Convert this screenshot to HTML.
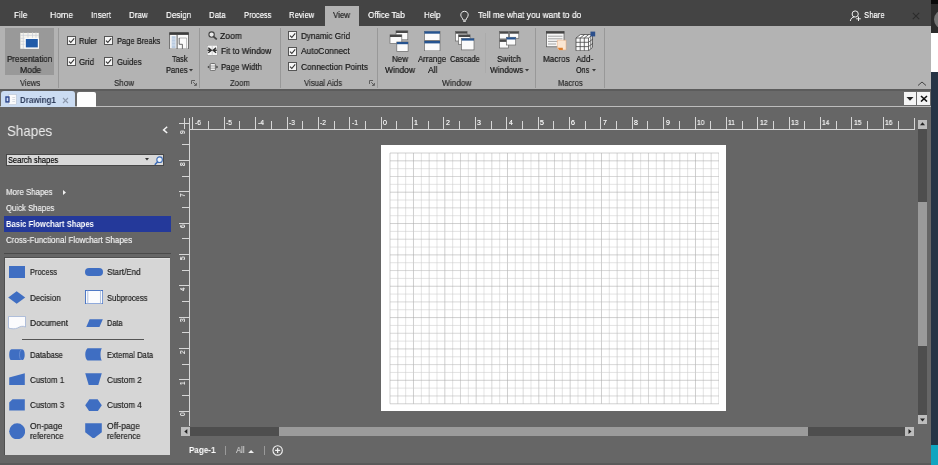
<!DOCTYPE html>
<html><head><meta charset="utf-8"><title>Visio - Drawing1</title>
<style>
html,body{margin:0;padding:0;}
body{width:938px;height:465px;overflow:hidden;background:#666666;position:relative;font-family:"Liberation Sans",sans-serif;}
.t{position:absolute;white-space:pre;line-height:1;transform-origin:0 0;will-change:transform;text-shadow:0 0 0.35px currentColor;}
.r{position:absolute;display:block;}
</style></head><body>
<div class="r" style="left:0.00px;top:0.00px;width:931.00px;height:25.70px;background:#444444;"></div>
<div class="r" style="left:324.50px;top:5.50px;width:34.10px;height:20.50px;background:#b3b3b3;"></div>
<span class="t" style="left:13.50px;top:11.00px;font-size:9.2px;transform:scaleX(0.8972);color:#f2f2f2;">File</span>
<span class="t" style="left:49.70px;top:11.00px;font-size:9.2px;transform:scaleX(0.9373);color:#f2f2f2;">Home</span>
<span class="t" style="left:90.50px;top:11.00px;font-size:9.2px;transform:scaleX(0.8736);color:#f2f2f2;">Insert</span>
<span class="t" style="left:128.70px;top:11.00px;font-size:9.2px;transform:scaleX(0.8711);color:#f2f2f2;">Draw</span>
<span class="t" style="left:165.50px;top:11.00px;font-size:9.2px;transform:scaleX(0.8800);color:#f2f2f2;">Design</span>
<span class="t" style="left:208.70px;top:11.00px;font-size:9.2px;transform:scaleX(0.8594);color:#f2f2f2;">Data</span>
<span class="t" style="left:243.60px;top:11.00px;font-size:9.2px;transform:scaleX(0.8275);color:#f2f2f2;">Process</span>
<span class="t" style="left:289.40px;top:11.00px;font-size:9.2px;transform:scaleX(0.8387);color:#f2f2f2;">Review</span>
<span class="t" style="left:368.30px;top:11.00px;font-size:9.2px;transform:scaleX(0.8958);color:#f2f2f2;">Office Tab</span>
<span class="t" style="left:423.90px;top:11.00px;font-size:9.2px;transform:scaleX(0.8721);color:#f2f2f2;">Help</span>
<span class="t" style="left:478.10px;top:11.00px;font-size:9.2px;transform:scaleX(0.9100);color:#f2f2f2;">Tell me what you want to do</span>
<span class="t" style="left:863.70px;top:11.00px;font-size:9.2px;transform:scaleX(0.8392);color:#f2f2f2;">Share</span>
<span class="t" style="left:332.90px;top:11.00px;font-size:9.2px;transform:scaleX(0.8648);color:#333;">View</span>
<svg class="r" style="left:459.00px;top:9.50px;" width="11.00" height="13.00" viewBox="0 0 11.00 13.00"><path d="M5.5 1.3c-2.3 0-3.7 1.7-3.7 3.6 0 1.5.8 2.3 1.5 3.3.4.6.6 1.2.7 1.9h3c.1-.7.3-1.3.7-1.9.7-1 1.5-1.800 1.500-3.3 0-1.900-1.400-3.600-3.700-3.600z" fill="none" stroke="#f0f0f0" stroke-width="1"/><path d="M4.200 11.400h2.600" stroke="#f0f0f0" stroke-width="0.9"/></svg>
<svg class="r" style="left:849.00px;top:9.00px;" width="13.00" height="13.00" viewBox="0 0 13.00 13.00"><circle cx="6.2" cy="5" r="3.1" fill="none" stroke="#f0f0f0" stroke-width="1"/><path d="M1.300 12c.4-2.600 2.200-3.900 4-4.100" fill="none" stroke="#f0f0f0" stroke-width="1"/><path d="M9.500 7.500v4.500M7.200 9.800h4.600" stroke="#f0f0f0" stroke-width="1"/></svg>
<svg class="r" style="left:912.00px;top:11.50px;" width="8.00" height="8.00" viewBox="0 0 8.00 8.00"><path d="M0.800 0.800l6.400 6.400M7.200 0.800l-6.400 6.400" stroke="#2c2c2c" stroke-width="1.100"/></svg>
<div class="r" style="left:0.00px;top:25.70px;width:931.00px;height:63.40px;background:#b3b3b3;"></div>
<div class="r" style="left:5.30px;top:27.80px;width:48.60px;height:47.10px;background:#999999;"></div>
<div class="r" style="left:58.40px;top:28.00px;width:1.00px;height:60.00px;background:#989898;"></div>
<div class="r" style="left:199.10px;top:28.00px;width:1.00px;height:60.00px;background:#989898;"></div>
<div class="r" style="left:280.00px;top:28.00px;width:1.00px;height:60.00px;background:#989898;"></div>
<div class="r" style="left:377.00px;top:28.00px;width:1.00px;height:60.00px;background:#989898;"></div>
<div class="r" style="left:535.10px;top:28.00px;width:1.00px;height:60.00px;background:#989898;"></div>
<div class="r" style="left:604.20px;top:28.00px;width:1.00px;height:60.00px;background:#989898;"></div>
<div class="r" style="left:485.20px;top:33.00px;width:1.00px;height:40.00px;background:#ababab;"></div>
<span class="t" style="left:19.50px;top:79.00px;font-size:8.8px;transform:scaleX(0.8621);color:#3a3a3a;">Views</span>
<span class="t" style="left:113.70px;top:79.00px;font-size:8.8px;transform:scaleX(0.9131);color:#3a3a3a;">Show</span>
<span class="t" style="left:229.80px;top:79.00px;font-size:8.8px;transform:scaleX(0.8803);color:#3a3a3a;">Zoom</span>
<span class="t" style="left:304.00px;top:79.00px;font-size:8.8px;transform:scaleX(0.8884);color:#3a3a3a;">Visual Aids</span>
<span class="t" style="left:441.60px;top:79.00px;font-size:8.8px;transform:scaleX(0.9394);color:#3a3a3a;">Window</span>
<span class="t" style="left:558.20px;top:79.00px;font-size:8.8px;transform:scaleX(0.8528);color:#3a3a3a;">Macros</span>
<span class="t" style="left:6.70px;top:55.00px;font-size:8.8px;transform:scaleX(0.9149);color:#2a2a2a;">Presentation</span>
<span class="t" style="left:19.50px;top:66.00px;font-size:8.8px;transform:scaleX(0.9677);color:#2a2a2a;">Mode</span>
<span class="t" style="left:171.70px;top:55.00px;font-size:8.8px;transform:scaleX(0.8622);color:#2a2a2a;">Task</span>
<span class="t" style="left:165.70px;top:66.00px;font-size:8.8px;transform:scaleX(0.8657);color:#2a2a2a;">Panes</span>
<span class="t" style="left:391.80px;top:55.00px;font-size:8.8px;transform:scaleX(0.9089);color:#2a2a2a;">New</span>
<span class="t" style="left:384.70px;top:66.00px;font-size:8.8px;transform:scaleX(0.9553);color:#2a2a2a;">Window</span>
<span class="t" style="left:418.10px;top:55.00px;font-size:8.8px;transform:scaleX(0.8976);color:#2a2a2a;">Arrange</span>
<span class="t" style="left:427.60px;top:66.00px;font-size:8.8px;transform:scaleX(0.9713);color:#2a2a2a;">All</span>
<span class="t" style="left:450.20px;top:55.00px;font-size:8.8px;transform:scaleX(0.8609);color:#2a2a2a;">Cascade</span>
<span class="t" style="left:496.80px;top:55.00px;font-size:8.8px;transform:scaleX(0.9260);color:#2a2a2a;">Switch</span>
<span class="t" style="left:490.10px;top:66.00px;font-size:8.8px;transform:scaleX(0.9300);color:#2a2a2a;">Windows</span>
<span class="t" style="left:542.90px;top:55.00px;font-size:8.8px;transform:scaleX(0.9256);color:#2a2a2a;">Macros</span>
<span class="t" style="left:576.30px;top:55.00px;font-size:8.8px;transform:scaleX(0.9307);color:#2a2a2a;">Add-</span>
<span class="t" style="left:576.30px;top:66.00px;font-size:8.8px;transform:scaleX(0.8241);color:#2a2a2a;">Ons</span>
<svg class="r" style="left:189.20px;top:69.20px;" width="4.00" height="2.50" viewBox="0 0 4.00 2.50"><path d="M0 0h4l-2 2.500z" fill="#3a3a3a"/></svg>
<svg class="r" style="left:524.80px;top:69.20px;" width="4.00" height="2.50" viewBox="0 0 4.00 2.50"><path d="M0 0h4l-2 2.500z" fill="#3a3a3a"/></svg>
<svg class="r" style="left:592.20px;top:69.20px;" width="4.00" height="2.50" viewBox="0 0 4.00 2.50"><path d="M0 0h4l-2 2.500z" fill="#3a3a3a"/></svg>
<svg class="r" style="left:67.00px;top:36.10px;" width="9.00" height="9.00" viewBox="0 0 9.00 9.00"><rect x="0.500" y="0.500" width="8" height="8" fill="#f6f6f6" stroke="#555" stroke-width="1"/><path d="M2 4.600l1.800 1.900 3.400-4.200" fill="none" stroke="#333" stroke-width="1.100"/></svg>
<svg class="r" style="left:67.00px;top:57.20px;" width="9.00" height="9.00" viewBox="0 0 9.00 9.00"><rect x="0.500" y="0.500" width="8" height="8" fill="#f6f6f6" stroke="#555" stroke-width="1"/><path d="M2 4.600l1.800 1.900 3.400-4.200" fill="none" stroke="#333" stroke-width="1.100"/></svg>
<svg class="r" style="left:104.30px;top:36.10px;" width="9.00" height="9.00" viewBox="0 0 9.00 9.00"><rect x="0.500" y="0.500" width="8" height="8" fill="#f6f6f6" stroke="#555" stroke-width="1"/><path d="M2 4.600l1.800 1.900 3.400-4.200" fill="none" stroke="#333" stroke-width="1.100"/></svg>
<svg class="r" style="left:104.30px;top:57.20px;" width="9.00" height="9.00" viewBox="0 0 9.00 9.00"><rect x="0.500" y="0.500" width="8" height="8" fill="#f6f6f6" stroke="#555" stroke-width="1"/><path d="M2 4.600l1.800 1.900 3.400-4.200" fill="none" stroke="#333" stroke-width="1.100"/></svg>
<svg class="r" style="left:288.40px;top:31.00px;" width="9.00" height="9.00" viewBox="0 0 9.00 9.00"><rect x="0.500" y="0.500" width="8" height="8" fill="#f6f6f6" stroke="#555" stroke-width="1"/><path d="M2 4.600l1.800 1.900 3.400-4.200" fill="none" stroke="#333" stroke-width="1.100"/></svg>
<svg class="r" style="left:288.40px;top:46.70px;" width="9.00" height="9.00" viewBox="0 0 9.00 9.00"><rect x="0.500" y="0.500" width="8" height="8" fill="#f6f6f6" stroke="#555" stroke-width="1"/><path d="M2 4.600l1.800 1.900 3.400-4.200" fill="none" stroke="#333" stroke-width="1.100"/></svg>
<svg class="r" style="left:288.40px;top:62.20px;" width="9.00" height="9.00" viewBox="0 0 9.00 9.00"><rect x="0.500" y="0.500" width="8" height="8" fill="#f6f6f6" stroke="#555" stroke-width="1"/><path d="M2 4.600l1.800 1.900 3.400-4.200" fill="none" stroke="#333" stroke-width="1.100"/></svg>
<span class="t" style="left:79.40px;top:37.00px;font-size:8.8px;transform:scaleX(0.8608);color:#2a2a2a;">Ruler</span>
<span class="t" style="left:79.40px;top:58.00px;font-size:8.8px;transform:scaleX(0.9083);color:#2a2a2a;">Grid</span>
<span class="t" style="left:116.70px;top:37.00px;font-size:8.8px;transform:scaleX(0.8574);color:#2a2a2a;">Page Breaks</span>
<span class="t" style="left:116.70px;top:58.00px;font-size:8.8px;transform:scaleX(0.8823);color:#2a2a2a;">Guides</span>
<span class="t" style="left:220.20px;top:32.00px;font-size:8.8px;transform:scaleX(0.9737);color:#2a2a2a;">Zoom</span>
<span class="t" style="left:220.50px;top:47.00px;font-size:8.8px;transform:scaleX(0.9418);color:#2a2a2a;">Fit to Window</span>
<span class="t" style="left:220.50px;top:63.00px;font-size:8.8px;transform:scaleX(0.8991);color:#2a2a2a;">Page Width</span>
<span class="t" style="left:300.70px;top:32.00px;font-size:8.8px;transform:scaleX(0.9194);color:#2a2a2a;">Dynamic Grid</span>
<span class="t" style="left:300.70px;top:47.00px;font-size:8.8px;transform:scaleX(0.9572);color:#2a2a2a;">AutoConnect</span>
<span class="t" style="left:300.70px;top:63.00px;font-size:8.8px;transform:scaleX(0.9381);color:#2a2a2a;">Connection Points</span>
<svg class="r" style="left:191.00px;top:80.20px;" width="6.00" height="6.00" viewBox="0 0 6.00 6.00"><path d="M0.500 4v-3.500h3.500" fill="none" stroke="#555" stroke-width="0.900"/><path d="M2.200 2.200l3 3M5.400 3v2.400h-2.400" fill="none" stroke="#555" stroke-width="0.900"/></svg>
<svg class="r" style="left:369.20px;top:80.20px;" width="6.00" height="6.00" viewBox="0 0 6.00 6.00"><path d="M0.500 4v-3.500h3.500" fill="none" stroke="#555" stroke-width="0.900"/><path d="M2.200 2.200l3 3M5.400 3v2.400h-2.400" fill="none" stroke="#555" stroke-width="0.900"/></svg>
<svg class="r" style="left:916.00px;top:79.50px;" width="12.00" height="7.00" viewBox="0 0 12.00 7.00"><path d="M2 5.500l4-3.500 4 3.500" fill="none" stroke="#444" stroke-width="1"/></svg>
<svg class="r" style="left:20.00px;top:32.00px;" width="19.50" height="17.50" viewBox="0 0 19.50 17.50"><rect x="0.300" y="0.300" width="18.500" height="16.500" fill="#f6f5ef"/><path d="M0.300 0.500h18.500" stroke="#777" stroke-width="0.600"/>
<path d="M0.300 3.300h18.500M0.300 6.300h5.500M0.300 9.300h5.500M0.300 12.300h5.500M3.300 0.300v16.500M8 0.300v6M12.500 0.300v6M16 0.300v6" stroke="#c9cdd6" stroke-width="0.700"/>
<rect x="5.200" y="6.400" width="13.200" height="9.600" fill="#1f5aa8" stroke="#fbfbfb" stroke-width="1.200"/></svg>
<svg class="r" style="left:169.30px;top:31.70px;" width="20.00" height="17.50" viewBox="0 0 20.00 17.50"><rect x="0.700" y="0.700" width="18.700" height="16.300" fill="#fafafa" stroke="#4a4a4a" stroke-width="0.700"/>
<rect x="0.400" y="0.400" width="19.300" height="2.500" fill="#3c3c3c"/>
<rect x="2.600" y="4.200" width="4" height="11.800" fill="#b9cbe0"/>
<path d="M2.600 7h4M2.600 10h4M2.600 13h4" stroke="#e6edf5" stroke-width="0.600"/>
<path d="M8.100 2.900v14" stroke="#444" stroke-width="0.900"/>
<path d="M10.200 6h7.400v10.500" fill="none" stroke="#8c8c8c" stroke-width="0.600"/>
<path d="M10.200 6v6.300h3.200v4.500" fill="none" stroke="#444" stroke-width="0.800"/></svg>
<svg class="r" style="left:208.00px;top:31.30px;" width="10.00" height="8.70" viewBox="0 0 10.00 8.70"><circle cx="3.600" cy="3.600" r="2.700" fill="#e9e9e9" stroke="#444" stroke-width="1.100"/><path d="M5.600 5.600l3.200 2.900" stroke="#444" stroke-width="1.700"/></svg>
<svg class="r" style="left:207.30px;top:45.30px;" width="10.40" height="10.40" viewBox="0 0 10.40 10.40"><rect x="0.200" y="0.200" width="10" height="10" fill="#f7f7f7" stroke="#8a8a8a" stroke-width="0.400"/>
<path d="M5.200 0.600v9.200" stroke="#b5b5b5" stroke-width="0.600"/>
<path d="M1.300 2.700l3 2.500-3 2.500M0.600 5.200h3" fill="none" stroke="#303030" stroke-width="1.400"/>
<path d="M9.100 2.700l-3 2.500 3 2.500M9.800 5.200h-3" fill="none" stroke="#303030" stroke-width="1.400"/></svg>
<svg class="r" style="left:206.80px;top:62.70px;" width="11.50" height="8.10" viewBox="0 0 11.50 8.10"><rect x="3.200" y="0.500" width="5.200" height="7.100" rx="1" fill="#f2f2f2" stroke="#555" stroke-width="0.800"/>
<path d="M3.200 3h5.200M3.200 5.200h5.200" stroke="#777" stroke-width="0.600"/>
<path d="M0.300 4l2-1.500v3zM11.300 4l-2-1.500v3z" fill="#444"/></svg>
<svg class="r" style="left:389.00px;top:30.00px;" width="21.00" height="22.00" viewBox="0 0 21.00 22.00"><rect x="7" y="0.8" width="11.8" height="9" fill="#fbfbfb" stroke="#6a6a6a" stroke-width="0.700"/><rect x="7" y="0.8" width="11.8" height="2.2" fill="#484848"/><rect x="1" y="4.8" width="11.8" height="8.8" fill="#fbfbfb" stroke="#6a6a6a" stroke-width="0.700"/><rect x="1" y="4.8" width="11.8" height="2.2" fill="#484848"/><rect x="7.8" y="12" width="11.3" height="9.4" fill="#fbfbfb" stroke="#6a6a6a" stroke-width="0.700"/><rect x="7.8" y="12" width="11.3" height="2.2" fill="#25538f"/></svg>
<svg class="r" style="left:424.00px;top:30.50px;" width="17.00" height="20.50" viewBox="0 0 17.00 20.50"><rect x="0.4" y="0.3" width="15.6" height="9.2" fill="#fbfbfb" stroke="#6a6a6a" stroke-width="0.700"/><rect x="0.4" y="0.3" width="15.6" height="2.4" fill="#25538f"/><rect x="0.4" y="10" width="15.6" height="9.9" fill="#fbfbfb" stroke="#6a6a6a" stroke-width="0.700"/><rect x="0.4" y="10" width="15.6" height="2.4" fill="#25538f"/></svg>
<svg class="r" style="left:455.00px;top:31.00px;" width="20.00" height="20.00" viewBox="0 0 20.00 20.00"><rect x="0.6" y="0.5" width="11.5" height="9.5" fill="#fbfbfb" stroke="#6a6a6a" stroke-width="0.700"/><rect x="0.6" y="0.5" width="11.5" height="2.2" fill="#484848"/><rect x="3.6" y="3.8" width="11.5" height="9.5" fill="#fbfbfb" stroke="#6a6a6a" stroke-width="0.700"/><rect x="3.6" y="3.8" width="11.5" height="2.2" fill="#484848"/><rect x="6.6" y="7.4" width="12.4" height="11.5" fill="#fbfbfb" stroke="#6a6a6a" stroke-width="0.700"/><rect x="6.6" y="7.4" width="12.4" height="2.2" fill="#25538f"/></svg>
<svg class="r" style="left:499.00px;top:31.00px;" width="21.00" height="18.00" viewBox="0 0 21.00 18.00"><rect x="0.6" y="0.5" width="8.8" height="7.4" fill="#fbfbfb" stroke="#6a6a6a" stroke-width="0.700"/><rect x="0.6" y="0.5" width="8.8" height="2.2" fill="#484848"/><rect x="10.6" y="0.5" width="9.2" height="6.8" fill="#fbfbfb" stroke="#6a6a6a" stroke-width="0.700"/><rect x="10.6" y="0.5" width="9.2" height="2.2" fill="#484848"/><rect x="0.6" y="8.7" width="8.8" height="8.3" fill="#fbfbfb" stroke="#6a6a6a" stroke-width="0.700"/><rect x="0.6" y="8.7" width="8.8" height="2.2" fill="#484848"/><rect x="7.5" y="6.3" width="9.2" height="7.7" fill="#fbfbfb" stroke="#6a6a6a" stroke-width="0.700"/><rect x="7.5" y="6.3" width="9.2" height="2.2" fill="#25538f"/></svg>
<svg class="r" style="left:546.00px;top:31.00px;" width="22.00" height="20.00" viewBox="0 0 22.00 20.00"><rect x="0.400" y="0.600" width="17.600" height="15.200" fill="#f7f7f7" stroke="#555" stroke-width="0.700"/>
<rect x="0.100" y="0.300" width="18.200" height="2.300" fill="#444"/>
<path d="M2 5.200h14.500M2 7.800h14.500M2 10.400h14.500M2 13h8" stroke="#8f8f8f" stroke-width="0.800"/>
<path d="M11.300 9.200h8.700v9.700h-7l-1.700-1.800z" fill="#fbe6d2" stroke="#e9a878" stroke-width="0.500"/>
<path d="M11.800 16.800h5v2.100h-3.600z" fill="#e07f2c"/></svg>
<svg class="r" style="left:575.00px;top:30.50px;" width="21.00" height="20.50" viewBox="0 0 21.00 20.50"><path d="M1 7l4.500-3.500h9.500l2.500 1.600v11.300l-4 3.400h-12.500z" fill="#fafafa" stroke="#4a4a4a" stroke-width="0.800"/>
<path d="M1 7h12.500l4.500-3.400M13.500 7v12.800M5.200 7v12.800M9.300 7v12.800M1 11.300h12.500l4.500-3.400M1 15.600h12.500l4.500-3.400M5.200 7l4.500-3.500M9.300 7l4.500-3.500M15.800 5.200v12.600" stroke="#4a4a4a" stroke-width="0.800" fill="none"/>
<rect x="15.500" y="0.600" width="4.700" height="4.800" fill="#2b4f8c"/></svg>
<div class="r" style="left:0.00px;top:89.10px;width:931.00px;height:1.90px;background:#5c5c5c;"></div>
<div class="r" style="left:0.00px;top:91.00px;width:931.00px;height:15.20px;background:#6a6a6a;"></div>
<div class="r" style="left:0.00px;top:106.20px;width:931.00px;height:1.10px;background:#bdbdbd;"></div>
<div class="r" style="left:1.00px;top:91.00px;width:73.80px;height:15.90px;background:#cbdcf2;border-radius:3px 3px 0 0;"></div>
<div class="r" style="left:76.70px;top:92.30px;width:19.00px;height:14.60px;background:#fdfdfd;border-radius:2px 2px 0 0;"></div>
<span class="t" style="left:19.80px;top:95.00px;font-size:9.4px;transform:scaleX(0.8486);color:#2f3d5c;font-weight:bold;text-shadow:none;">Drawing1</span>
<svg class="r" style="left:61.50px;top:96.80px;" width="7.50" height="7.20" viewBox="0 0 7.50 7.20"><path d="M1 1l5 5M6 1l-5 5" stroke="#8c99ad" stroke-width="1.100"/></svg>
<svg class="r" style="left:4.50px;top:94.00px;" width="12.00" height="11.00" viewBox="0 0 12.00 11.00"><rect x="3.800" y="0.600" width="7.400" height="10" fill="#fbfbfb" stroke="#b4bdcc" stroke-width="0.500"/>
<path d="M7.300 3.500h2.800M7.300 5.500h2.800M7.300 7.500h2.800" stroke="#c2c9d4" stroke-width="0.600"/>
<rect x="0.300" y="2.300" width="4.300" height="6.300" fill="#27418a"/>
<rect x="1.600" y="3.700" width="1.700" height="3.500" fill="#cfdcf2"/></svg>
<div class="r" style="left:903.80px;top:92.20px;width:11.90px;height:12.70px;background:#f4f4f4;"></div>
<div class="r" style="left:917.20px;top:92.20px;width:12.50px;height:12.70px;background:#f4f4f4;"></div>
<svg class="r" style="left:905.80px;top:96.20px;" width="8.00" height="5.50" viewBox="0 0 8.00 5.50"><path d="M0.500 1h7l-3.500 3.800z" fill="#222"/></svg>
<svg class="r" style="left:919.50px;top:94.90px;" width="8.00" height="7.50" viewBox="0 0 8.00 7.50"><path d="M1 1l6 5.500M7 1l-6 5.500" stroke="#111" stroke-width="1.600"/></svg>
<span class="t" style="left:6.60px;top:124.00px;font-size:14.3px;transform:scaleX(0.9320);color:#ececec;text-shadow:none;">Shapes</span>
<svg class="r" style="left:162.00px;top:126.00px;" width="7.00" height="8.00" viewBox="0 0 7.00 8.00"><path d="M5.200 0.800l-3.600 3.100 3.600 3.100" fill="none" stroke="#f4f4f4" stroke-width="1.500"/></svg>
<div class="r" style="left:6.30px;top:153.80px;width:158.20px;height:12.40px;background:#d9d9d9;box-shadow:inset 0 0 0 1px #484848;"></div>
<span class="t" style="left:7.80px;top:156.00px;font-size:8.8px;transform:scaleX(0.8552);color:#1a1a1a;">Search shapes</span>
<svg class="r" style="left:144.50px;top:158.40px;" width="4.00" height="2.60" viewBox="0 0 4.00 2.60"><path d="M0 0h4l-2 2.400z" fill="#333"/></svg>
<svg class="r" style="left:153.50px;top:155.50px;" width="9.50" height="9.70" viewBox="0 0 9.50 9.70"><circle cx="5.600" cy="3.700" r="2.800" fill="#eef3fa" stroke="#3d6cb5" stroke-width="1.100"/><path d="M3.700 5.800l-2.900 3" stroke="#3d6cb5" stroke-width="1.500"/></svg>
<span class="t" style="left:5.70px;top:188.00px;font-size:8.8px;transform:scaleX(0.8885);color:#e6e6e6;">More Shapes</span>
<svg class="r" style="left:63.30px;top:189.50px;" width="3.20" height="5.00" viewBox="0 0 3.20 5.00"><path d="M0 0l3 2.500-3 2.500z" fill="#f0f0f0"/></svg>
<span class="t" style="left:5.70px;top:204.00px;font-size:8.8px;transform:scaleX(0.8835);color:#e6e6e6;">Quick Shapes</span>
<div class="r" style="left:4.20px;top:215.80px;width:166.60px;height:16.00px;background:#24399a;"></div>
<span class="t" style="left:5.70px;top:220.00px;font-size:8.8px;transform:scaleX(0.8674);color:#ffffff;font-weight:bold;text-shadow:none;">Basic Flowchart Shapes</span>
<span class="t" style="left:5.70px;top:236.00px;font-size:8.8px;transform:scaleX(0.9054);color:#e6e6e6;">Cross-Functional Flowchart Shapes</span>
<div class="r" style="left:4.20px;top:253.40px;width:166.60px;height:1.00px;background:#4a4a4a;"></div>
<div class="r" style="left:4.20px;top:257.00px;width:166.10px;height:198.00px;background:#505050;"></div>
<div class="r" style="left:5.00px;top:258.20px;width:165.30px;height:196.80px;background:#d6d6d6;"></div>
<div class="r" style="left:5.00px;top:258.20px;width:165.30px;height:1.20px;background:#e2e2e2;"></div>
<div class="r" style="left:21.50px;top:338.60px;width:122.70px;height:1.00px;background:#555;"></div>
<span class="t" style="left:29.60px;top:268.00px;font-size:8.6px;transform:scaleX(0.8724);color:#363636;">Process</span>
<span class="t" style="left:29.60px;top:294.00px;font-size:8.6px;transform:scaleX(0.9278);color:#363636;">Decision</span>
<span class="t" style="left:29.60px;top:319.00px;font-size:8.6px;transform:scaleX(0.9721);color:#363636;">Document</span>
<span class="t" style="left:29.50px;top:351.00px;font-size:8.6px;transform:scaleX(0.8937);color:#363636;">Database</span>
<span class="t" style="left:29.50px;top:376.00px;font-size:8.6px;transform:scaleX(0.9321);color:#363636;">Custom 1</span>
<span class="t" style="left:29.50px;top:401.00px;font-size:8.6px;transform:scaleX(0.9321);color:#363636;">Custom 3</span>
<span class="t" style="left:29.50px;top:422.00px;font-size:8.6px;transform:scaleX(0.9682);color:#363636;">On-page</span>
<span class="t" style="left:29.50px;top:432.00px;font-size:8.6px;transform:scaleX(0.9249);color:#363636;">reference</span>
<span class="t" style="left:106.80px;top:268.00px;font-size:8.6px;transform:scaleX(0.9372);color:#363636;">Start/End</span>
<span class="t" style="left:106.80px;top:294.00px;font-size:8.6px;transform:scaleX(0.8940);color:#363636;">Subprocess</span>
<span class="t" style="left:106.80px;top:319.00px;font-size:8.6px;transform:scaleX(0.8588);color:#363636;">Data</span>
<span class="t" style="left:106.60px;top:351.00px;font-size:8.6px;transform:scaleX(0.8867);color:#363636;">External Data</span>
<span class="t" style="left:106.60px;top:376.00px;font-size:8.6px;transform:scaleX(0.9457);color:#363636;">Custom 2</span>
<span class="t" style="left:106.60px;top:401.00px;font-size:8.6px;transform:scaleX(0.9457);color:#363636;">Custom 4</span>
<span class="t" style="left:106.60px;top:422.00px;font-size:8.6px;transform:scaleX(0.9878);color:#363636;">Off-page</span>
<span class="t" style="left:106.60px;top:432.00px;font-size:8.6px;transform:scaleX(0.9249);color:#363636;">reference</span>
<div class="r" style="left:8.60px;top:266.10px;width:16.60px;height:11.90px;background:#3f6ec2;"></div>
<svg class="r" style="left:8.00px;top:290.50px;" width="17.50" height="13.10" viewBox="0 0 17.50 13.10"><path d="M0.200 6.500l8.500-6.200 8.500 6.200-8.500 6.200z" fill="#3f6ec2"/></svg>
<svg class="r" style="left:8.00px;top:316.00px;" width="18.00" height="13.50" viewBox="0 0 18.00 13.50"><path d="M0.500 0.500h17v10.500c-3-1.500-5.500-0.500-8 1-2.500 1.200-6 1-9 0z" fill="#fbfbfd" stroke="#9fb3d6" stroke-width="0.800"/></svg>
<div class="r" style="left:84.90px;top:268.30px;width:17.90px;height:7.50px;background:#3f6ec2;border-radius:4px;"></div>
<svg class="r" style="left:84.70px;top:289.60px;" width="18.30" height="14.40" viewBox="0 0 18.30 14.40"><rect x="0.500" y="0.500" width="17.300" height="13.400" fill="#fbfcfe" stroke="#3f6ec2" stroke-width="0.900"/><path d="M2.800 0.500v13.400M15.500 0.500v13.400" stroke="#9fb3d6" stroke-width="0.800"/></svg>
<svg class="r" style="left:85.50px;top:318.50px;" width="17.00" height="8.80" viewBox="0 0 17.00 8.80"><path d="M3.600 0.200h13.200l-3.600 8.400h-13.200z" fill="#3f6ec2"/></svg>
<svg class="r" style="left:8.80px;top:348.80px;" width="16.00" height="11.60" viewBox="0 0 16.00 11.60"><path d="M2.500 0.300h10.500c1.600 0 2.700 2.400 2.700 5.500s-1.100 5.500-2.700 5.500h-10.500c-1.400 0-2.300-2.400-2.300-5.500s0.900-5.500 2.300-5.500z" fill="#3f6ec2"/><path d="M12.800 0.600c-1.400 0-2.300 2.300-2.300 5.200s0.900 5.200 2.300 5.200" fill="none" stroke="#7fa0dc" stroke-width="0.600"/></svg>
<svg class="r" style="left:85.20px;top:348.20px;" width="17.00" height="12.80" viewBox="0 0 17.00 12.80"><path d="M2.500 0.300h14.300c-1.700 2.800-1.700 9.400 0 12.200h-14.300c-3-2.800-3-9.400 0-12.200z" fill="#3f6ec2"/></svg>
<svg class="r" style="left:8.80px;top:373.40px;" width="16.00" height="12.20" viewBox="0 0 16.00 12.20"><path d="M0.200 4.500l15.600-4.300v11.800h-15.600z" fill="#3f6ec2"/></svg>
<svg class="r" style="left:85.20px;top:373.40px;" width="17.00" height="12.20" viewBox="0 0 17.00 12.20"><path d="M0.200 0.200h16.600l-3.500 11.800h-9.600z" fill="#3f6ec2"/></svg>
<svg class="r" style="left:8.80px;top:399.00px;" width="16.00" height="11.70" viewBox="0 0 16.00 11.70"><path d="M3.500 0.200h12.300v11.300h-15.600v-8z" fill="#3f6ec2"/></svg>
<svg class="r" style="left:85.20px;top:398.50px;" width="17.00" height="12.70" viewBox="0 0 17.00 12.70"><path d="M4.400 0.200h8.200l4.200 6.100-4.200 6.200h-8.200l-4.200-6.200z" fill="#3f6ec2"/></svg>
<svg class="r" style="left:8.80px;top:422.60px;" width="16.40" height="16.60" viewBox="0 0 16.40 16.60"><circle cx="8.200" cy="8.300" r="8" fill="#3f6ec2"/></svg>
<svg class="r" style="left:85.20px;top:422.60px;" width="17.00" height="15.90" viewBox="0 0 17.00 15.90"><path d="M0.200 0.200h16.600v9l-8.300 6.500-8.300-6.500z" fill="#3f6ec2"/></svg>
<div class="r" style="left:189.30px;top:118.00px;width:1.00px;height:307.80px;background:#d6d6d6;"></div>
<div class="r" style="left:189.80px;top:128.90px;width:724.70px;height:1.00px;background:#d6d6d6;"></div>
<div class="r" style="left:913.60px;top:117.50px;width:1.00px;height:12.40px;background:#d6d6d6;"></div>
<div class="r" style="left:178.60px;top:122.60px;width:11.20px;height:0.90px;background:#d6d6d6;"></div>
<div class="r" style="left:183.70px;top:117.80px;width:0.90px;height:11.60px;background:#d6d6d6;"></div>
<div class="r" style="left:192.42px;top:117.40px;width:1.00px;height:12.00px;background:#d6d6d6;"></div>
<span class="t" style="left:194.82px;top:119.00px;font-size:7.0px;transform:scaleX(0.9503);color:#f0f0f0;">-6</span>
<div class="r" style="left:208.11px;top:121.40px;width:1.00px;height:8.00px;background:#d6d6d6;"></div>
<div class="r" style="left:223.80px;top:117.40px;width:1.00px;height:12.00px;background:#d6d6d6;"></div>
<span class="t" style="left:226.20px;top:119.00px;font-size:7.0px;transform:scaleX(0.9503);color:#f0f0f0;">-5</span>
<div class="r" style="left:239.49px;top:121.40px;width:1.00px;height:8.00px;background:#d6d6d6;"></div>
<div class="r" style="left:255.18px;top:117.40px;width:1.00px;height:12.00px;background:#d6d6d6;"></div>
<span class="t" style="left:257.58px;top:119.00px;font-size:7.0px;transform:scaleX(0.9503);color:#f0f0f0;">-4</span>
<div class="r" style="left:270.87px;top:121.40px;width:1.00px;height:8.00px;background:#d6d6d6;"></div>
<div class="r" style="left:286.56px;top:117.40px;width:1.00px;height:12.00px;background:#d6d6d6;"></div>
<span class="t" style="left:288.96px;top:119.00px;font-size:7.0px;transform:scaleX(0.9503);color:#f0f0f0;">-3</span>
<div class="r" style="left:302.25px;top:121.40px;width:1.00px;height:8.00px;background:#d6d6d6;"></div>
<div class="r" style="left:317.94px;top:117.40px;width:1.00px;height:12.00px;background:#d6d6d6;"></div>
<span class="t" style="left:320.34px;top:119.00px;font-size:7.0px;transform:scaleX(0.9503);color:#f0f0f0;">-2</span>
<div class="r" style="left:333.63px;top:121.40px;width:1.00px;height:8.00px;background:#d6d6d6;"></div>
<div class="r" style="left:349.32px;top:117.40px;width:1.00px;height:12.00px;background:#d6d6d6;"></div>
<span class="t" style="left:351.72px;top:119.00px;font-size:7.0px;transform:scaleX(0.9503);color:#f0f0f0;">-1</span>
<div class="r" style="left:365.01px;top:121.40px;width:1.00px;height:8.00px;background:#d6d6d6;"></div>
<div class="r" style="left:380.70px;top:117.40px;width:1.00px;height:12.00px;background:#d6d6d6;"></div>
<span class="t" style="left:383.10px;top:119.00px;font-size:7.0px;transform:scaleX(0.9984);color:#f0f0f0;">0</span>
<div class="r" style="left:396.39px;top:121.40px;width:1.00px;height:8.00px;background:#d6d6d6;"></div>
<div class="r" style="left:412.08px;top:117.40px;width:1.00px;height:12.00px;background:#d6d6d6;"></div>
<span class="t" style="left:414.48px;top:119.00px;font-size:7.0px;transform:scaleX(0.9984);color:#f0f0f0;">1</span>
<div class="r" style="left:427.77px;top:121.40px;width:1.00px;height:8.00px;background:#d6d6d6;"></div>
<div class="r" style="left:443.46px;top:117.40px;width:1.00px;height:12.00px;background:#d6d6d6;"></div>
<span class="t" style="left:445.86px;top:119.00px;font-size:7.0px;transform:scaleX(0.9984);color:#f0f0f0;">2</span>
<div class="r" style="left:459.15px;top:121.40px;width:1.00px;height:8.00px;background:#d6d6d6;"></div>
<div class="r" style="left:474.84px;top:117.40px;width:1.00px;height:12.00px;background:#d6d6d6;"></div>
<span class="t" style="left:477.24px;top:119.00px;font-size:7.0px;transform:scaleX(0.9984);color:#f0f0f0;">3</span>
<div class="r" style="left:490.53px;top:121.40px;width:1.00px;height:8.00px;background:#d6d6d6;"></div>
<div class="r" style="left:506.22px;top:117.40px;width:1.00px;height:12.00px;background:#d6d6d6;"></div>
<span class="t" style="left:508.62px;top:119.00px;font-size:7.0px;transform:scaleX(0.9984);color:#f0f0f0;">4</span>
<div class="r" style="left:521.91px;top:121.40px;width:1.00px;height:8.00px;background:#d6d6d6;"></div>
<div class="r" style="left:537.60px;top:117.40px;width:1.00px;height:12.00px;background:#d6d6d6;"></div>
<span class="t" style="left:540.00px;top:119.00px;font-size:7.0px;transform:scaleX(0.9984);color:#f0f0f0;">5</span>
<div class="r" style="left:553.29px;top:121.40px;width:1.00px;height:8.00px;background:#d6d6d6;"></div>
<div class="r" style="left:568.98px;top:117.40px;width:1.00px;height:12.00px;background:#d6d6d6;"></div>
<span class="t" style="left:571.38px;top:119.00px;font-size:7.0px;transform:scaleX(0.9984);color:#f0f0f0;">6</span>
<div class="r" style="left:584.67px;top:121.40px;width:1.00px;height:8.00px;background:#d6d6d6;"></div>
<div class="r" style="left:600.36px;top:117.40px;width:1.00px;height:12.00px;background:#d6d6d6;"></div>
<span class="t" style="left:602.76px;top:119.00px;font-size:7.0px;transform:scaleX(0.9984);color:#f0f0f0;">7</span>
<div class="r" style="left:616.05px;top:121.40px;width:1.00px;height:8.00px;background:#d6d6d6;"></div>
<div class="r" style="left:631.74px;top:117.40px;width:1.00px;height:12.00px;background:#d6d6d6;"></div>
<span class="t" style="left:634.14px;top:119.00px;font-size:7.0px;transform:scaleX(0.9984);color:#f0f0f0;">8</span>
<div class="r" style="left:647.43px;top:121.40px;width:1.00px;height:8.00px;background:#d6d6d6;"></div>
<div class="r" style="left:663.12px;top:117.40px;width:1.00px;height:12.00px;background:#d6d6d6;"></div>
<span class="t" style="left:665.52px;top:119.00px;font-size:7.0px;transform:scaleX(0.9984);color:#f0f0f0;">9</span>
<div class="r" style="left:678.81px;top:121.40px;width:1.00px;height:8.00px;background:#d6d6d6;"></div>
<div class="r" style="left:694.50px;top:117.40px;width:1.00px;height:12.00px;background:#d6d6d6;"></div>
<span class="t" style="left:696.90px;top:119.00px;font-size:7.0px;transform:scaleX(0.9342);color:#f0f0f0;">10</span>
<div class="r" style="left:710.19px;top:121.40px;width:1.00px;height:8.00px;background:#d6d6d6;"></div>
<div class="r" style="left:725.88px;top:117.40px;width:1.00px;height:12.00px;background:#d6d6d6;"></div>
<span class="t" style="left:728.28px;top:119.00px;font-size:7.0px;transform:scaleX(0.9388);color:#f0f0f0;">11</span>
<div class="r" style="left:741.57px;top:121.40px;width:1.00px;height:8.00px;background:#d6d6d6;"></div>
<div class="r" style="left:757.26px;top:117.40px;width:1.00px;height:12.00px;background:#d6d6d6;"></div>
<span class="t" style="left:759.66px;top:119.00px;font-size:7.0px;transform:scaleX(0.9342);color:#f0f0f0;">12</span>
<div class="r" style="left:772.95px;top:121.40px;width:1.00px;height:8.00px;background:#d6d6d6;"></div>
<div class="r" style="left:788.64px;top:117.40px;width:1.00px;height:12.00px;background:#d6d6d6;"></div>
<span class="t" style="left:791.04px;top:119.00px;font-size:7.0px;transform:scaleX(0.9342);color:#f0f0f0;">13</span>
<div class="r" style="left:804.33px;top:121.40px;width:1.00px;height:8.00px;background:#d6d6d6;"></div>
<div class="r" style="left:820.02px;top:117.40px;width:1.00px;height:12.00px;background:#d6d6d6;"></div>
<span class="t" style="left:822.42px;top:119.00px;font-size:7.0px;transform:scaleX(0.9342);color:#f0f0f0;">14</span>
<div class="r" style="left:835.71px;top:121.40px;width:1.00px;height:8.00px;background:#d6d6d6;"></div>
<div class="r" style="left:851.40px;top:117.40px;width:1.00px;height:12.00px;background:#d6d6d6;"></div>
<span class="t" style="left:853.80px;top:119.00px;font-size:7.0px;transform:scaleX(0.9342);color:#f0f0f0;">15</span>
<div class="r" style="left:867.09px;top:121.40px;width:1.00px;height:8.00px;background:#d6d6d6;"></div>
<div class="r" style="left:882.78px;top:117.40px;width:1.00px;height:12.00px;background:#d6d6d6;"></div>
<span class="t" style="left:885.18px;top:119.00px;font-size:7.0px;transform:scaleX(0.9342);color:#f0f0f0;">16</span>
<div class="r" style="left:898.47px;top:121.40px;width:1.00px;height:8.00px;background:#d6d6d6;"></div>
<span class="t" style="left:179.27px;top:134.20px;font-size:7px;color:#f0f0f0;transform:rotate(-90deg) scaleX(0.87);">9</span>
<div class="r" style="left:182.00px;top:144.47px;width:7.80px;height:1.00px;background:#d6d6d6;"></div>
<div class="r" style="left:178.50px;top:160.13px;width:11.30px;height:1.00px;background:#d6d6d6;"></div>
<span class="t" style="left:179.27px;top:165.53px;font-size:7px;color:#f0f0f0;transform:rotate(-90deg) scaleX(0.87);">8</span>
<div class="r" style="left:182.00px;top:175.79px;width:7.80px;height:1.00px;background:#d6d6d6;"></div>
<div class="r" style="left:178.50px;top:191.46px;width:11.30px;height:1.00px;background:#d6d6d6;"></div>
<span class="t" style="left:179.27px;top:196.86px;font-size:7px;color:#f0f0f0;transform:rotate(-90deg) scaleX(0.87);">7</span>
<div class="r" style="left:182.00px;top:207.12px;width:7.80px;height:1.00px;background:#d6d6d6;"></div>
<div class="r" style="left:178.50px;top:222.79px;width:11.30px;height:1.00px;background:#d6d6d6;"></div>
<span class="t" style="left:179.27px;top:228.19px;font-size:7px;color:#f0f0f0;transform:rotate(-90deg) scaleX(0.87);">6</span>
<div class="r" style="left:182.00px;top:238.46px;width:7.80px;height:1.00px;background:#d6d6d6;"></div>
<div class="r" style="left:178.50px;top:254.12px;width:11.30px;height:1.00px;background:#d6d6d6;"></div>
<span class="t" style="left:179.27px;top:259.52px;font-size:7px;color:#f0f0f0;transform:rotate(-90deg) scaleX(0.87);">5</span>
<div class="r" style="left:182.00px;top:269.79px;width:7.80px;height:1.00px;background:#d6d6d6;"></div>
<div class="r" style="left:178.50px;top:285.45px;width:11.30px;height:1.00px;background:#d6d6d6;"></div>
<span class="t" style="left:179.27px;top:290.85px;font-size:7px;color:#f0f0f0;transform:rotate(-90deg) scaleX(0.87);">4</span>
<div class="r" style="left:182.00px;top:301.12px;width:7.80px;height:1.00px;background:#d6d6d6;"></div>
<div class="r" style="left:178.50px;top:316.78px;width:11.30px;height:1.00px;background:#d6d6d6;"></div>
<span class="t" style="left:179.27px;top:322.18px;font-size:7px;color:#f0f0f0;transform:rotate(-90deg) scaleX(0.87);">3</span>
<div class="r" style="left:182.00px;top:332.44px;width:7.80px;height:1.00px;background:#d6d6d6;"></div>
<div class="r" style="left:178.50px;top:348.11px;width:11.30px;height:1.00px;background:#d6d6d6;"></div>
<span class="t" style="left:179.27px;top:353.51px;font-size:7px;color:#f0f0f0;transform:rotate(-90deg) scaleX(0.87);">2</span>
<div class="r" style="left:182.00px;top:363.78px;width:7.80px;height:1.00px;background:#d6d6d6;"></div>
<div class="r" style="left:178.50px;top:379.44px;width:11.30px;height:1.00px;background:#d6d6d6;"></div>
<span class="t" style="left:179.27px;top:384.84px;font-size:7px;color:#f0f0f0;transform:rotate(-90deg) scaleX(0.87);">1</span>
<div class="r" style="left:182.00px;top:395.11px;width:7.80px;height:1.00px;background:#d6d6d6;"></div>
<div class="r" style="left:178.50px;top:410.77px;width:11.30px;height:1.00px;background:#d6d6d6;"></div>
<span class="t" style="left:179.27px;top:416.17px;font-size:7px;color:#f0f0f0;transform:rotate(-90deg) scaleX(0.87);">0</span>
<div class="r" style="left:381.20px;top:144.70px;width:345.00px;height:266.30px;background:#ffffff;"></div>
<svg class="r" style="left:388.50px;top:151.90px" width="330.99" height="252.80" viewBox="-1 -1 330.99 252.80"><path d="M0.00 0v250.80" stroke="#a8a8a8" stroke-width="0.550"/><path d="M7.83 0v250.80" stroke="#b8b8b8" stroke-width="0.550"/><path d="M15.67 0v250.80" stroke="#cccccc" stroke-width="0.550"/><path d="M23.50 0v250.80" stroke="#a8a8a8" stroke-width="0.550"/><path d="M31.33 0v250.80" stroke="#cccccc" stroke-width="0.550"/><path d="M39.16 0v250.80" stroke="#b8b8b8" stroke-width="0.550"/><path d="M47.00 0v250.80" stroke="#cccccc" stroke-width="0.550"/><path d="M54.83 0v250.80" stroke="#a8a8a8" stroke-width="0.550"/><path d="M62.66 0v250.80" stroke="#cccccc" stroke-width="0.550"/><path d="M70.50 0v250.80" stroke="#b8b8b8" stroke-width="0.550"/><path d="M78.33 0v250.80" stroke="#cccccc" stroke-width="0.550"/><path d="M86.16 0v250.80" stroke="#a8a8a8" stroke-width="0.550"/><path d="M94.00 0v250.80" stroke="#cccccc" stroke-width="0.550"/><path d="M101.83 0v250.80" stroke="#b8b8b8" stroke-width="0.550"/><path d="M109.66 0v250.80" stroke="#cccccc" stroke-width="0.550"/><path d="M117.50 0v250.80" stroke="#a8a8a8" stroke-width="0.550"/><path d="M125.33 0v250.80" stroke="#cccccc" stroke-width="0.550"/><path d="M133.16 0v250.80" stroke="#b8b8b8" stroke-width="0.550"/><path d="M140.99 0v250.80" stroke="#cccccc" stroke-width="0.550"/><path d="M148.83 0v250.80" stroke="#a8a8a8" stroke-width="0.550"/><path d="M156.66 0v250.80" stroke="#cccccc" stroke-width="0.550"/><path d="M164.49 0v250.80" stroke="#b8b8b8" stroke-width="0.550"/><path d="M172.33 0v250.80" stroke="#cccccc" stroke-width="0.550"/><path d="M180.16 0v250.80" stroke="#a8a8a8" stroke-width="0.550"/><path d="M187.99 0v250.80" stroke="#cccccc" stroke-width="0.550"/><path d="M195.83 0v250.80" stroke="#b8b8b8" stroke-width="0.550"/><path d="M203.66 0v250.80" stroke="#cccccc" stroke-width="0.550"/><path d="M211.49 0v250.80" stroke="#a8a8a8" stroke-width="0.550"/><path d="M219.32 0v250.80" stroke="#cccccc" stroke-width="0.550"/><path d="M227.16 0v250.80" stroke="#b8b8b8" stroke-width="0.550"/><path d="M234.99 0v250.80" stroke="#cccccc" stroke-width="0.550"/><path d="M242.82 0v250.80" stroke="#a8a8a8" stroke-width="0.550"/><path d="M250.66 0v250.80" stroke="#cccccc" stroke-width="0.550"/><path d="M258.49 0v250.80" stroke="#b8b8b8" stroke-width="0.550"/><path d="M266.32 0v250.80" stroke="#cccccc" stroke-width="0.550"/><path d="M274.16 0v250.80" stroke="#a8a8a8" stroke-width="0.550"/><path d="M281.99 0v250.80" stroke="#cccccc" stroke-width="0.550"/><path d="M289.82 0v250.80" stroke="#b8b8b8" stroke-width="0.550"/><path d="M297.65 0v250.80" stroke="#cccccc" stroke-width="0.550"/><path d="M305.49 0v250.80" stroke="#a8a8a8" stroke-width="0.550"/><path d="M313.32 0v250.80" stroke="#cccccc" stroke-width="0.550"/><path d="M321.15 0v250.80" stroke="#b8b8b8" stroke-width="0.550"/><path d="M328.99 0v250.80" stroke="#a8a8a8" stroke-width="0.550"/><path d="M0 0.00h328.99" stroke="#a8a8a8" stroke-width="0.550"/><path d="M0 7.84h328.99" stroke="#a8a8a8" stroke-width="0.550"/><path d="M0 15.68h328.99" stroke="#cccccc" stroke-width="0.550"/><path d="M0 23.51h328.99" stroke="#b8b8b8" stroke-width="0.550"/><path d="M0 31.35h328.99" stroke="#cccccc" stroke-width="0.550"/><path d="M0 39.19h328.99" stroke="#a8a8a8" stroke-width="0.550"/><path d="M0 47.03h328.99" stroke="#cccccc" stroke-width="0.550"/><path d="M0 54.86h328.99" stroke="#b8b8b8" stroke-width="0.550"/><path d="M0 62.70h328.99" stroke="#cccccc" stroke-width="0.550"/><path d="M0 70.54h328.99" stroke="#a8a8a8" stroke-width="0.550"/><path d="M0 78.38h328.99" stroke="#cccccc" stroke-width="0.550"/><path d="M0 86.21h328.99" stroke="#b8b8b8" stroke-width="0.550"/><path d="M0 94.05h328.99" stroke="#cccccc" stroke-width="0.550"/><path d="M0 101.89h328.99" stroke="#a8a8a8" stroke-width="0.550"/><path d="M0 109.73h328.99" stroke="#cccccc" stroke-width="0.550"/><path d="M0 117.56h328.99" stroke="#b8b8b8" stroke-width="0.550"/><path d="M0 125.40h328.99" stroke="#cccccc" stroke-width="0.550"/><path d="M0 133.24h328.99" stroke="#a8a8a8" stroke-width="0.550"/><path d="M0 141.08h328.99" stroke="#cccccc" stroke-width="0.550"/><path d="M0 148.91h328.99" stroke="#b8b8b8" stroke-width="0.550"/><path d="M0 156.75h328.99" stroke="#cccccc" stroke-width="0.550"/><path d="M0 164.59h328.99" stroke="#a8a8a8" stroke-width="0.550"/><path d="M0 172.43h328.99" stroke="#cccccc" stroke-width="0.550"/><path d="M0 180.26h328.99" stroke="#b8b8b8" stroke-width="0.550"/><path d="M0 188.10h328.99" stroke="#cccccc" stroke-width="0.550"/><path d="M0 195.94h328.99" stroke="#a8a8a8" stroke-width="0.550"/><path d="M0 203.78h328.99" stroke="#cccccc" stroke-width="0.550"/><path d="M0 211.61h328.99" stroke="#b8b8b8" stroke-width="0.550"/><path d="M0 219.45h328.99" stroke="#cccccc" stroke-width="0.550"/><path d="M0 227.29h328.99" stroke="#a8a8a8" stroke-width="0.550"/><path d="M0 235.12h328.99" stroke="#cccccc" stroke-width="0.550"/><path d="M0 242.96h328.99" stroke="#b8b8b8" stroke-width="0.550"/><path d="M0 250.80h328.99" stroke="#a8a8a8" stroke-width="0.550"/></svg>
<div class="r" style="left:181.00px;top:427.30px;width:733.40px;height:9.00px;background:#4e4e4e;"></div>
<div class="r" style="left:279.20px;top:427.30px;width:528.80px;height:9.00px;background:#9b9b9b;"></div>
<div class="r" style="left:181.00px;top:427.30px;width:8.60px;height:9.00px;background:#bdbdbd;"></div>
<div class="r" style="left:905.00px;top:427.30px;width:9.40px;height:9.00px;background:#bdbdbd;"></div>
<svg class="r" style="left:183.50px;top:429.30px;" width="4.00" height="5.00" viewBox="0 0 4.00 5.00"><path d="M3.300 0l-3 2.500 3 2.500z" fill="#222"/></svg>
<svg class="r" style="left:907.80px;top:429.30px;" width="4.00" height="5.00" viewBox="0 0 4.00 5.00"><path d="M0.500 0l3 2.500-3 2.500z" fill="#222"/></svg>
<div class="r" style="left:917.50px;top:120.00px;width:9.00px;height:304.00px;background:#4e4e4e;"></div>
<div class="r" style="left:917.50px;top:202.40px;width:9.00px;height:144.00px;background:#9b9b9b;"></div>
<div class="r" style="left:917.50px;top:120.00px;width:9.00px;height:8.80px;background:#bdbdbd;"></div>
<div class="r" style="left:917.50px;top:415.00px;width:9.00px;height:9.00px;background:#bdbdbd;"></div>
<svg class="r" style="left:919.50px;top:122.40px;" width="5.00" height="4.00" viewBox="0 0 5.00 4.00"><path d="M0 3.300l2.500-3 2.500 3z" fill="#222"/></svg>
<svg class="r" style="left:919.50px;top:417.80px;" width="5.00" height="4.00" viewBox="0 0 5.00 4.00"><path d="M0 0.500l2.500 3 2.500-3z" fill="#222"/></svg>
<span class="t" style="left:188.80px;top:446.00px;font-size:8.8px;transform:scaleX(0.9149);color:#ffffff;font-weight:bold;text-shadow:none;">Page-1</span>
<div class="r" style="left:225.10px;top:445.60px;width:1.00px;height:9.90px;background:#9a9a9a;"></div>
<span class="t" style="left:236.40px;top:446.00px;font-size:8.8px;transform:scaleX(0.8895);color:#c4c4c4;">All</span>
<svg class="r" style="left:248.00px;top:449.80px;" width="6.20" height="3.20" viewBox="0 0 6.20 3.20"><path d="M0 3.100l3.100-3 3.100 3z" fill="#efefef"/></svg>
<div class="r" style="left:264.20px;top:445.60px;width:1.00px;height:9.90px;background:#9a9a9a;"></div>
<svg class="r" style="left:272.00px;top:445.40px;" width="11.40" height="11.00" viewBox="0 0 11.40 11.00"><circle cx="5.650" cy="5.450" r="4.700" fill="none" stroke="#f2f2f2" stroke-width="1.100"/><path d="M5.650 2.900v5.100M3.100 5.450h5.100" stroke="#f2f2f2" stroke-width="1.200"/></svg>
<div class="r" style="left:0.00px;top:462.80px;width:931.00px;height:2.20px;background:#5a5a5a;"></div>
<div class="r" style="left:931.00px;top:0.00px;width:7.00px;height:32.80px;background:#2b2b2b;"></div>
<div class="r" style="left:931.00px;top:0.00px;width:7.00px;height:4.30px;background:#0a0a0a;"></div>
<div class="r" style="left:931px;top:0;width:7px;height:32.800px;overflow:hidden"><div class="r" style="left:2.800px;top:9.500px;width:19px;height:19px;border-radius:50%;background:#757575"></div></div>
<div class="r" style="left:931.00px;top:32.80px;width:7.00px;height:39.20px;background:#ffffff;"></div>
<div class="r" style="left:931.00px;top:72.00px;width:7.00px;height:373.00px;background:#263445;"></div>
<div class="r" style="left:931.00px;top:445.00px;width:7.00px;height:20.00px;background:#10a5c0;"></div>
</body></html>
